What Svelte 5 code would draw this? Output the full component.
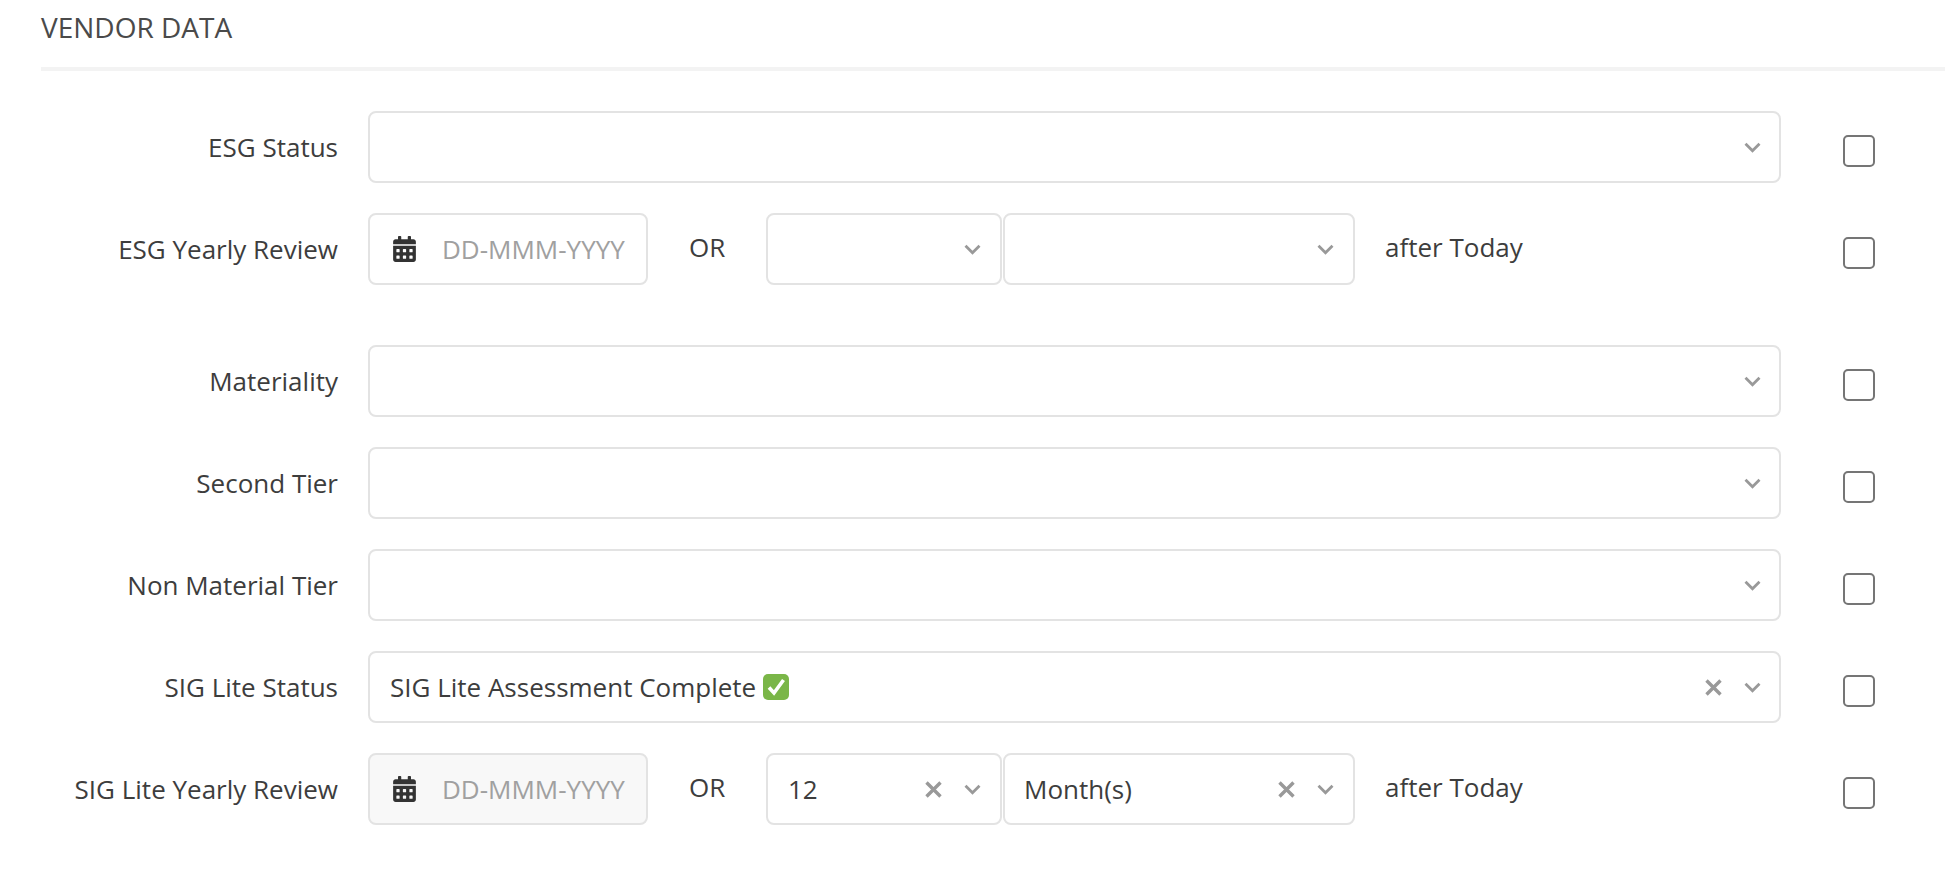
<script>
  const calPath =
    "M0 464c0 26.5 21.5 48 48 48h352c26.5 0 48-21.5 48-48V192H0v272zm320-196c0-6.6 5.4-12 12-12h40c6.6 0 12 5.4 12 12v40c0 6.6-5.4 12-12 12h-40c-6.6 0-12-5.4-12-12v-40zm0 128c0-6.6 5.4-12 12-12h40c6.6 0 12 5.4 12 12v40c0 6.6-5.4 12-12 12h-40c-6.6 0-12-5.4-12-12v-40zM192 268c0-6.6 5.4-12 12-12h40c6.6 0 12 5.4 12 12v40c0 6.6-5.4 12-12 12h-40c-6.6 0-12-5.4-12-12v-40zm0 128c0-6.6 5.4-12 12-12h40c6.6 0 12 5.4 12 12v40c0 6.6-5.4 12-12 12h-40c-6.6 0-12-5.4-12-12v-40zM64 268c0-6.6 5.4-12 12-12h40c6.6 0 12 5.4 12 12v40c0 6.6-5.4 12-12 12H76c-6.6 0-12-5.4-12-12v-40zm0 128c0-6.6 5.4-12 12-12h40c6.6 0 12 5.4 12 12v40c0 6.6-5.4 12-12 12H76c-6.6 0-12-5.4-12-12v-40zM400 64h-48V16c0-8.8-7.2-16-16-16h-32c-8.8 0-16 7.2-16 16v48H160V16c0-8.8-7.2-16-16-16h-32c-8.8 0-16 7.2-16 16v48H48C21.5 64 0 85.5 0 112v48h448v-48c0-26.5-21.5-48-48-48z";

  const rows = [
    { label: "ESG Status", type: "select" },
    { label: "ESG Yearly Review", type: "review", gapAfter: true },
    { label: "Materiality", type: "select" },
    { label: "Second Tier", type: "select" },
    { label: "Non Material Tier", type: "select" },
    { label: "SIG Lite Status", type: "select", value: "SIG Lite Assessment Complete", emoji: true },
    { label: "SIG Lite Yearly Review", type: "review", disabled: true, num: "12", unit: "Month(s)" },
  ];
</script>

{#snippet select(value, emoji, cls)}
  <div class="select {cls}">
    <span class="value">
      {value ?? ""}
      {#if emoji}
        <svg class="emoji" viewBox="0 0 26 26" width="26" height="26" aria-hidden="true">
          <rect x="0" y="0" width="26" height="26" rx="5" fill="#7ab648" />
          <path d="M6 13.500l5 5.500 9.500-13" fill="none" stroke="#fff" stroke-width="3.600" />
        </svg>
      {/if}
    </span>
    {#if value}
      <svg class="clear" viewBox="0 0 17 17" width="17" height="17" aria-hidden="true">
        <path d="M1.500 1.500l14 14M15.500 1.500l-14 14" stroke="#999" stroke-width="3.400" fill="none" />
      </svg>
    {/if}
    <svg class="chev" viewBox="0 0 17 11" width="17" height="11" aria-hidden="true">
      <path d="M1.500 1.800l7 7 7-7" stroke="#999" stroke-width="2.800" fill="none" />
    </svg>
  </div>
{/snippet}

<div class="page">
  <h2>VENDOR DATA</h2>
  <div class="rows">
    {#each rows as row}
      <div class="row" class:gap-after={row.gapAfter}>
        <label class="name" for="">{row.label}</label>
        <div class="field">
          {#if row.type === "select"}
            {@render select(row.value, row.emoji, "full")}
          {:else}
            <div class="date" class:disabled={row.disabled}>
              <svg class="cal" viewBox="0 0 448 512" width="23" height="26" aria-hidden="true">
                <path d={calPath} fill="#333" />
              </svg>
              <span class="placeholder">DD-MMM-YYYY</span>
            </div>
            <span class="or">OR</span>
            {@render select(row.num, false, "num")}
            {@render select(row.unit, false, "unit")}
            <span class="after">after Today</span>
          {/if}
        </div>
        <span class="check"></span>
      </div>
    {/each}
  </div>
</div>

<style>
  :global(body) {
    background: #fff;
    overflow: hidden;
  }

  .page {
    padding: 0 13px 0 41px;
    font-family: "Open Sans", sans-serif;
    font-size: 26px;
    color: #3d3d3d;
  }

  h2 {
    margin: 0;
    padding-top: 9px;
    height: 58px;
    border-bottom: 4px solid #f3f3f3;
    font-size: 28px;
    font-weight: 400;
    line-height: 36px;
    color: #4a4a4a;
  }

  .rows {
    padding-top: 40px;
    display: flex;
    flex-direction: column;
    gap: 30px;
  }

  .row {
    display: flex;
    align-items: center;
    height: 72px;
  }

  .row.gap-after {
    margin-bottom: 30px;
  }

  .name {
    width: 297px;
    margin-right: 30px;
    text-align: right;
    flex: none;
  }

  .field {
    width: 1413px;
    flex: none;
    display: flex;
    align-items: center;
    height: 100%;
  }

  .select,
  .date {
    height: 72px;
    box-sizing: border-box;
    border: 2.5px solid #e3e3e3;
    border-radius: 8px;
    display: flex;
    align-items: center;
    background: #fff;
  }

  .select {
    padding: 0 18px 0 20px;
  }

  .select.full {
    width: 100%;
  }

  .select.num {
    width: 236px;
    margin-right: 1px;
    padding-right: 19px;
  }

  .select.unit {
    width: 352px;
    padding-left: 19px;
    padding-right: 19px;
  }

  .value {
    flex: 1;
    display: flex;
    align-items: center;
    gap: 7px;
    white-space: nowrap;
  }

  .clear {
    margin-right: 22px;
  }

  .date {
    width: 280px;
    padding-left: 23px;
  }

  .date.disabled {
    background: #f8f8f8;
  }

  .cal {
    margin-right: 26px;
  }

  .placeholder {
    color: #a0a0a0;
    white-space: nowrap;
  }

  .or {
    width: 118px;
    padding-left: 41px;
    box-sizing: border-box;
    margin-top: -4px;
  }

  .after {
    margin-left: 30px;
    margin-top: -4px;
  }

  .check {
    width: 32px;
    height: 32px;
    margin-left: 62px;
    margin-top: 8px;
    box-sizing: border-box;
    border: 2.5px solid #757575;
    border-radius: 5px;
    flex: none;
  }
</style>
